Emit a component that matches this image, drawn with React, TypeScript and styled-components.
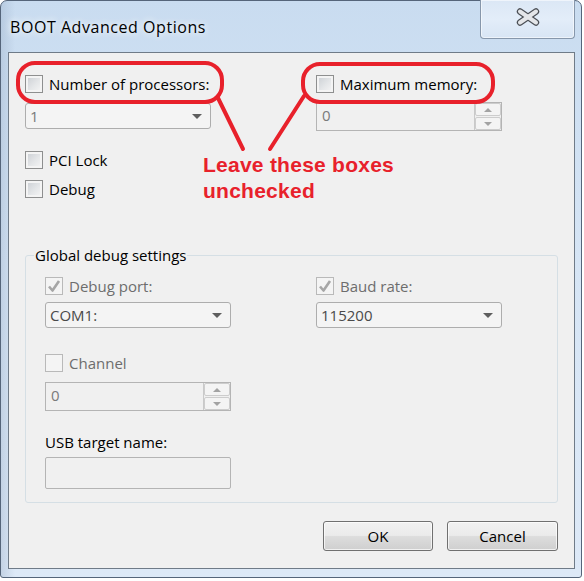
import React from "react";
import styled, { createGlobalStyle } from "styled-components";

const GlobalStyle = createGlobalStyle`
  html, body {
    margin: 0;
    padding: 0;
    background: #ffffff;
  }
  body {
    font-family: "Open Sans", "Noto Sans", sans-serif;
  }
`;

const App = () => {
  return (
    <Stage>
      <GlobalStyle />
      <Window>
        <TitleBar>
          <Title>BOOT Advanced Options</Title>
          <CloseButton aria-label="Close">
            <svg width="24" height="18" viewBox="0 0 24 18">
              <g strokeLinecap="round">
                <line x1="4" y1="3.5" x2="20" y2="14.5" stroke="#4b4f55" strokeWidth="6.4" />
                <line x1="20" y1="3.5" x2="4" y2="14.5" stroke="#4b4f55" strokeWidth="6.4" />
                <line x1="4" y1="3.5" x2="20" y2="14.5" stroke="#e4e6e9" strokeWidth="4" />
                <line x1="20" y1="3.5" x2="4" y2="14.5" stroke="#e4e6e9" strokeWidth="4" />
              </g>
            </svg>
          </CloseButton>
        </TitleBar>

        <Client>
          <TopGrid>
            <Column>
              <CheckField label="Number of processors:" />
              <Combo $top={10} value="1" />
              <CheckField label="PCI Lock" $top={22} />
              <CheckField label="Debug" $top={11} />
            </Column>
            <Column>
              <CheckField label="Maximum memory:" />
              <Spin $top={9} value="0" />
            </Column>
          </TopGrid>

          <GroupBox>
            <GroupTitle>Global debug settings</GroupTitle>
            <GroupGrid>
              <Column>
                <CheckField label="Debug port:" checked disabled />
                <Combo $top={7} value="COM1:" $dark />
                <CheckField label="Channel" disabled $top={26} />
                <Spin $top={10} value="0" />
                <FieldLabel>USB target name:</FieldLabel>
                <TextBox />
              </Column>
              <Column>
                <CheckField label="Baud rate:" checked disabled />
                <Combo $top={7} value="115200" $dark />
              </Column>
            </GroupGrid>
          </GroupBox>

          <ButtonRow>
            <DialogButton $width={110}>OK</DialogButton>
            <DialogButton $width={111}>Cancel</DialogButton>
          </ButtonRow>
        </Client>
      </Window>

      <Overlay width="584" height="581" viewBox="0 0 584 581">
        <g fill="none" stroke="#e8212b" strokeWidth="4" strokeLinecap="round">
          <rect x="18" y="63" width="204" height="39" rx="17" />
          <rect x="303" y="64" width="190" height="38" rx="17" />
          <line x1="218" y1="98" x2="243" y2="149" />
          <line x1="304" y1="96" x2="270" y2="149" />
        </g>
      </Overlay>
      <Note>
        Leave these boxes
        <br />
        unchecked
      </Note>
    </Stage>
  );
};

type CheckFieldProps = {
  label: string;
  checked?: boolean;
  disabled?: boolean;
  $top?: number;
};

const CheckField = ({ label, checked, disabled, $top }: CheckFieldProps) => (
  <CheckRow $top={$top}>
    <Box $disabled={disabled}>
      {checked && (
        <svg width="16" height="16" viewBox="0 0 16 16">
          <path
            d="M3 8.5 L6.5 12.5 L13 3"
            fill="none"
            stroke="#a6a6a6"
            strokeWidth="2.6"
            strokeLinejoin="round"
          />
        </svg>
      )}
    </Box>
    <CheckLabel $disabled={disabled}>{label}</CheckLabel>
  </CheckRow>
);

const Combo = ({ value, $top, $dark }: { value: string; $top?: number; $dark?: boolean }) => (
  <ComboBox $top={$top}>
    <ComboText $dark={$dark}>{value}</ComboText>
    <DownArrow />
  </ComboBox>
);

const Spin = ({ value, $top }: { value: string; $top?: number }) => (
  <SpinBox $top={$top}>
    <ComboText $lift>{value}</ComboText>
    <SpinButtons>
      <SpinButton>
        <SmallArrow $up />
      </SpinButton>
      <SpinButton>
        <SmallArrow />
      </SpinButton>
    </SpinButtons>
  </SpinBox>
);

export default App;

const Stage = styled.div`
  position: relative;
  width: 584px;
  height: 581px;
  overflow: hidden;
  background: #ffffff;
`;

const Window = styled.div`
  box-sizing: border-box;
  width: 582px;
  height: 578px;
  border: 1px solid #55657a;
  border-radius: 7px 7px 3px 3px;
  background:
    linear-gradient(90deg, rgba(150, 170, 195, 0.35) 0px, rgba(255, 255, 255, 0) 14px),
    linear-gradient(180deg, #c9dcf0 0%, #d6e5f5 45%, #dde9f7 100%);
  display: flex;
  flex-direction: column;
  padding: 0 6px 8px 7px;
`;

const TitleBar = styled.div`
  height: 51px;
  display: flex;
  align-items: flex-start;
  justify-content: space-between;
  margin-left: -7px;
  margin-right: -6px;
  padding-left: 9px;
`;

const Title = styled.div`
  margin-top: 16px;
  font-size: 16px;
  letter-spacing: 0.55px;
  line-height: 20px;
  color: #000000;
  text-shadow: 0 0 6px rgba(255, 255, 255, 0.9), 0 0 10px rgba(255, 255, 255, 0.7);
`;

const CloseButton = styled.div`
  box-sizing: border-box;
  width: 95px;
  height: 39px;
  margin-top: -1px;
  margin-right: 6px;
  border: 1px solid #8797ab;
  border-top: none;
  border-radius: 0 0 4px 4px;
  background: linear-gradient(180deg, #dbe7f5 0%, #e3edf9 50%, #d8e5f4 100%);
  box-shadow: inset 0 0 0 1px rgba(255, 255, 255, 0.55);
  display: flex;
  align-items: center;
  justify-content: center;
  padding-bottom: 4px;
`;

const Client = styled.div`
  box-sizing: border-box;
  width: 567px;
  height: 517px;
  border: 1px solid #6f7b88;
  background: #f0f0f0;
  display: flex;
  flex-direction: column;
`;

const TopGrid = styled.div`
  display: grid;
  grid-template-columns: 186px 186px;
  column-gap: 105px;
  margin: 22px 0 0 16px;
`;

const Column = styled.div`
  display: flex;
  flex-direction: column;
`;

const CheckRow = styled.div<{ $top?: number }>`
  display: flex;
  align-items: center;
  height: 18px;
  margin-top: ${(p) => p.$top ?? 0}px;
`;

const Box = styled.span<{ $disabled?: boolean }>`
  box-sizing: border-box;
  width: 18px;
  height: 18px;
  flex: none;
  display: flex;
  align-items: center;
  justify-content: center;
  border: 1px solid ${(p) => (p.$disabled ? "#b9b9b9" : "#8e8f8f")};
  background: ${(p) =>
    p.$disabled
      ? "#f4f4f4"
      : "linear-gradient(135deg, #c9cdd2 0%, #e4e6e8 55%, #f6f6f6 100%)"};
  box-shadow: inset 0 0 0 2px #f4f4f4;
`;

const CheckLabel = styled.span<{ $disabled?: boolean }>`
  margin-left: 6px;
  font-size: 15px;
  line-height: 20px;
  white-space: nowrap;
  color: ${(p) => (p.$disabled ? "#6d6d6d" : "#000000")};
`;

const ComboBox = styled.div<{ $top?: number }>`
  box-sizing: border-box;
  height: 26px;
  margin-top: ${(p) => p.$top ?? 0}px;
  border: 1px solid #adadad;
  border-radius: 3px;
  background: #f4f4f4;
  display: flex;
  align-items: center;
  justify-content: space-between;
  padding: 0 8px 0 4px;
`;

const ComboText = styled.span<{ $dark?: boolean; $lift?: boolean }>`
  font-size: 15px;
  line-height: 20px;
  padding-bottom: ${(p) => (p.$lift ? 3 : 0)}px;
  color: ${(p) => (p.$dark ? "#4a4a4a" : "#7a7a7a")};
`;

const DownArrow = styled.span`
  width: 0;
  height: 0;
  border-left: 5px solid transparent;
  border-right: 5px solid transparent;
  border-top: 5px solid #5e5e5e;
  margin-top: 1px;
`;

const SpinBox = styled.div<{ $top?: number }>`
  box-sizing: border-box;
  height: 29px;
  margin-top: ${(p) => p.$top ?? 0}px;
  border: 1px solid #b4b4b4;
  background: #f0f0f0;
  display: flex;
  align-items: center;
  justify-content: space-between;
  padding-left: 5px;
`;

const SpinButtons = styled.div`
  align-self: stretch;
  width: 26px;
  display: flex;
  flex-direction: column;
  gap: 1px;
  border-left: 1px solid #c9c9c9;
`;

const SpinButton = styled.div`
  flex: 1;
  box-sizing: border-box;
  border: 1px solid #cdcdcd;
  border-radius: 2px;
  background: #f4f4f4;
  display: flex;
  align-items: center;
  justify-content: center;
`;

const SmallArrow = styled.span<{ $up?: boolean }>`
  width: 0;
  height: 0;
  border-left: 4px solid transparent;
  border-right: 4px solid transparent;
  ${(p) => (p.$up ? "border-bottom: 4px solid #a3a3a3;" : "border-top: 4px solid #a3a3a3;")}
`;

const GroupBox = styled.div`
  box-sizing: border-box;
  margin: 57px 16px 0 16px;
  height: 248px;
  border: 1px solid #d5dfe5;
  border-radius: 3px;
  display: flex;
  flex-direction: column;
`;

const GroupTitle = styled.div`
  margin: -11px 0 0 8px;
  padding: 0 1px;
  width: fit-content;
  background: #f0f0f0;
  font-size: 15px;
  line-height: 20px;
  color: #000000;
`;

const GroupGrid = styled.div`
  display: grid;
  grid-template-columns: 186px 186px;
  column-gap: 85px;
  margin: 12px 0 0 19px;
`;

const FieldLabel = styled.div`
  margin-top: 21px;
  font-size: 15px;
  line-height: 20px;
  color: #000000;
`;

const TextBox = styled.div`
  box-sizing: border-box;
  height: 32px;
  margin-top: 5px;
  border: 1px solid #b4b4b4;
  border-radius: 2px;
  background: #f0f0f0;
`;

const ButtonRow = styled.div`
  display: flex;
  justify-content: flex-end;
  gap: 14px;
  margin: 18px 16px 0 0;
`;

const DialogButton = styled.div<{ $width: number }>`
  box-sizing: border-box;
  width: ${(p) => p.$width}px;
  height: 30px;
  border: 1px solid #707070;
  border-radius: 3px;
  background: linear-gradient(180deg, #f2f2f2 0%, #ebebeb 48%, #dddddd 52%, #cfcfcf 100%);
  box-shadow: inset 0 0 0 1px rgba(255, 255, 255, 0.7);
  display: flex;
  align-items: center;
  justify-content: center;
  font-size: 15px;
  color: #000000;
`;

const Overlay = styled.svg`
  position: absolute;
  left: 0;
  top: 0;
  pointer-events: none;
`;

const Note = styled.div`
  position: absolute;
  left: 203px;
  top: 152px;
  font-family: "Liberation Sans", Arial, sans-serif;
  font-weight: bold;
  font-size: 21px;
  letter-spacing: 0.25px;
  line-height: 26px;
  color: #e8212b;
  white-space: nowrap;
`;
